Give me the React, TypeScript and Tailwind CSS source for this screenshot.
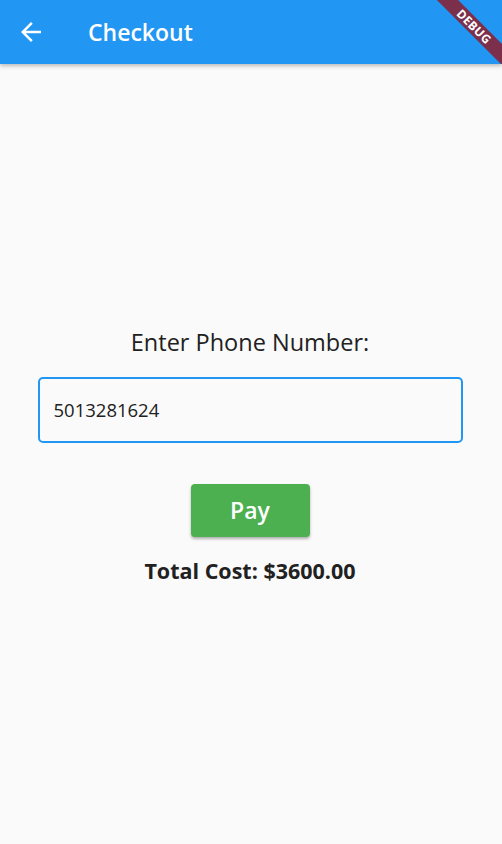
import React from "react";

const font = { fontFamily: '"Open Sans", "Noto Sans", sans-serif' };

function BackArrow() {
  return (
    <svg width="30" height="30" viewBox="0 0 24 24" fill="white" aria-hidden="true">
      <path d="M20 11H7.83l5.59-5.59L12 4l-8 8 8 8 1.41-1.41L7.83 13H20v-2z" />
    </svg>
  );
}

function DebugBanner() {
  return (
    <div className="pointer-events-none absolute right-0 top-0 h-[64px] w-[80px] overflow-hidden">
      <div className="absolute left-[-3px] top-[19px] flex h-[15px] w-[110px] rotate-45 items-center justify-center bg-[#7b2f4a]">
        <span className="text-[12px] font-bold leading-none tracking-[0.3px] text-white">DEBUG</span>
      </div>
    </div>
  );
}

export default function App() {
  return (
    <div className="flex min-h-[844px] w-full flex-col bg-[#fafafa] text-[#212121]" style={font}>
      <header className="relative z-10 flex h-[64px] items-center bg-[#2196f3] shadow-[0_2px_4px_rgba(0,0,0,0.25)]">
        <button type="button" className="ml-[16px] flex items-center justify-center">
          <BackArrow />
        </button>
        <h1 className="ml-[42px] text-[23px] font-semibold leading-none text-white">Checkout</h1>
        <DebugBanner />
      </header>
      <main className="flex flex-col items-center pr-[2px] pt-[263px]">
        <p className="text-[23.5px] leading-[30px]">Enter Phone Number:</p>
        <div className="mt-[20px] flex h-[66px] w-[425px] items-center rounded-[5px] border-2 border-[#2196f3] px-[14px]">
          <span className="text-[18.5px]">5013281624</span>
        </div>
        <button
          type="button"
          className="mt-[41px] flex h-[53px] w-[119px] items-center justify-center rounded-[4px] bg-[#4caf50] text-[23px] font-semibold text-white shadow-[0_2px_3px_rgba(0,0,0,0.3)]"
        >
          Pay
        </button>
        <p className="mt-[19px] text-[21.5px] font-bold leading-[30px]">Total Cost: $3600.00</p>
      </main>
    </div>
  );
}
